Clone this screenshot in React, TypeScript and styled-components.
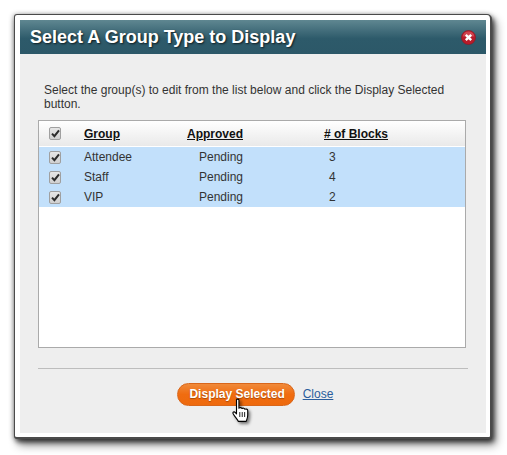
import styled, { createGlobalStyle } from 'styled-components';

const groups = [
  { name: 'Attendee', approved: 'Pending', blocks: 3 },
  { name: 'Staff', approved: 'Pending', blocks: 4 },
  { name: 'VIP', approved: 'Pending', blocks: 2 },
];

const Global = createGlobalStyle`
  html, body { margin: 0; background: #fff; }
  body { font-family: "Liberation Sans", Arial, sans-serif; }
`;

const Page = styled.div`
  width: 507px;
  height: 455px;
  padding: 14px 0 0 14px;
  box-sizing: border-box;
  overflow: hidden;
`;

const Dialog = styled.div`
  width: 478px;
  height: 425px;
  box-sizing: border-box;
  background: #fff;
  border: 2px solid #4a4a4a;
  border-top-width: 1px;
  border-left-width: 1px;
  border-radius: 3px 5px 3px 3px;
  padding: 5px 4px 4px 5px;
  box-shadow: 2px 3px 5px rgba(0, 0, 0, 0.65), 4px 6px 10px rgba(0, 0, 0, 0.45), -1px 0 5px rgba(0, 0, 0, 0.25);
  display: flex;
  flex-direction: column;
`;

const Header = styled.div`
  height: 34px;
  flex: none;
  display: flex;
  align-items: center;
  justify-content: space-between;
  padding: 0 10px 0 10px;
  background: linear-gradient(#5f8791, #2d5a6a 55%, #2c5868);
`;

const Title = styled.h1`
  margin: 0;
  font-size: 18px;
  font-weight: 700;
  color: #fff;
  text-shadow: 1px 1px 2px rgba(0, 0, 0, 0.7);
`;

const Body = styled.div`
  flex: 1;
  background: #eee;
  padding: 29px 18px 0;
  display: flex;
  flex-direction: column;
`;

const Intro = styled.p`
  margin: 0 0 10px 6px;
  font-size: 12px;
  line-height: 14px;
  color: #333;
  width: 414px;
`;

const ListBox = styled.div`
  width: 428px;
  height: 228px;
  box-sizing: border-box;
  border: 1px solid #aaa;
  background: #fff;
  margin-top: -1px;
`;

const Row = styled.div<{ $head?: boolean }>`
  display: grid;
  grid-template-columns: 45px 103px 137px 1fr;
  align-items: center;
  font-size: 12px;
  height: ${p => (p.$head ? '25px' : '20px')};
  color: ${p => (p.$head ? '#111' : '#333')};
  font-weight: ${p => (p.$head ? 700 : 400)};
  text-decoration: ${p => (p.$head ? 'underline' : 'none')};
  background: ${p => (p.$head ? 'linear-gradient(#fff, #e9e9e9)' : '#c2e0fb')};
  border-bottom: ${p => (p.$head ? '1px solid #fff' : '0')};
`;

const CheckCell = styled.div`
  display: flex;
  padding-left: 10px;
`;

const Check = styled.span`
  width: 10px;
  height: 11px;
  border: 1px solid #a0a0a0;
  border-radius: 2px;
  background: linear-gradient(#e6e6e6, #d0d0d0);
  display: flex;
  align-items: center;
  justify-content: center;
`;

const ValueCell = styled.div<{ $indent?: number }>`
  padding-left: ${p => p.$indent ?? 0}px;
`;

const Divider = styled.div`
  width: 430px;
  height: 1px;
  background: #bdbdbd;
  margin-top: 20px;
`;

const Actions = styled.div`
  display: flex;
  align-items: center;
  justify-content: center;
  gap: 8px;
  margin-top: 14px;
  padding-left: 4px;
`;

const Primary = styled.button`
  position: relative;
  width: 118px;
  height: 23px;
  padding: 0 0 2px 3px;
  border: 1px solid #d9661a;
  border-radius: 12px;
  background: linear-gradient(#f08a3a, #f06c10 50%, #ee6a0e);
  color: #fff;
  font: 700 12px "Liberation Sans", Arial, sans-serif;
  text-shadow: 0 1px 1px rgba(120, 50, 0, 0.6);
`;

const CloseLink = styled.a`
  font-size: 12px;
  color: #2a5d9c;
  text-decoration: underline;
  margin-bottom: 2px;
`;

const Pointer = styled.svg`
  position: absolute;
  left: 53px;
  top: 14px;
  filter: drop-shadow(2px 2px 1.5px rgba(0, 0, 0, 0.5));
`;

function Tick() {
  return (
    <svg width="9" height="9" viewBox="0 0 9 9">
      <path d="M1 4.6 L3.4 7.2 L8 1.4" fill="none" stroke="#2c2c2c" strokeWidth="2" />
    </svg>
  );
}

function Box() {
  return (
    <CheckCell>
      <Check>
        <Tick />
      </Check>
    </CheckCell>
  );
}

function CloseIcon() {
  return (
    <svg width="15" height="15" viewBox="0 0 15 15">
      <circle cx="7.5" cy="7.5" r="7" fill="#b81c2a" stroke="#8e1420" strokeWidth="0.6" />
      <path d="M1.6 6.4 A6 6 0 0 1 13.4 6.4 Z" fill="#e0606a" opacity="0.6" />
      <path d="M4.8 4.8 L10.2 10.2 M10.2 4.8 L4.8 10.2" stroke="#fff" strokeWidth="2.4" />
    </svg>
  );
}

function Hand() {
  return (
    <Pointer width="22" height="27" viewBox="0 0 20 24">
      <path
        d="M5 1.5 C5 .5 7.2 .5 7.2 1.5 V9 C8 8.2 9.6 8.3 10 9.3 C10.8 8.6 12.3 8.9 12.6 10 C13.5 9.4 15.2 9.8 15.2 11.2 V15.5 C15.2 18 14.4 19 13.8 21 H6.6 C6 19 4 17.5 2.2 14.5 C1 12.6 2.8 11.6 4 13 L5 14.2 Z"
        fill="#fff"
        stroke="#000"
        strokeWidth="1"
        strokeLinejoin="round"
      />
      <path d="M8 12.5 V17 M10.2 12.5 V17 M12.4 12.5 V17" stroke="#000" strokeWidth="0.8" />
    </Pointer>
  );
}

export default function App() {
  return (
    <Page>
      <Global />
      <Dialog>
        <Header>
          <Title>Select A Group Type to Display</Title>
          <CloseIcon />
        </Header>
        <Body>
          <Intro>Select the group(s) to edit from the list below and click the Display Selected button.</Intro>
          <ListBox>
            <Row $head>
              <Box />
              <ValueCell>Group</ValueCell>
              <ValueCell>Approved</ValueCell>
              <ValueCell>
                # of Blocks
              </ValueCell>
            </Row>
            {groups.map(g => (
              <Row key={g.name}>
                <Box />
                <ValueCell>{g.name}</ValueCell>
                <ValueCell $indent={12}>{g.approved}</ValueCell>
                <ValueCell $indent={5}>{g.blocks}</ValueCell>
              </Row>
            ))}
          </ListBox>
          <Divider />
          <Actions>
            <Primary>
              Display Selected
              <Hand />
            </Primary>
            <CloseLink href="#">Close</CloseLink>
          </Actions>
        </Body>
      </Dialog>
    </Page>
  );
}
